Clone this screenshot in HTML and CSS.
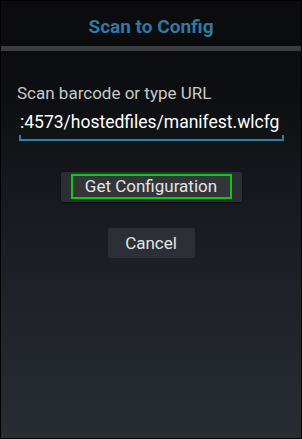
FILE: index.html
```html
<!DOCTYPE html>
<html lang="en">
<head>
    <meta charset="UTF-8">
    <meta name="viewport" content="width=device-width, initial-scale=1.0">
    <title>Scan to Config</title>
    <link rel="stylesheet" href="styles.css">
</head>
<body>

    <div class="dialog">
        <div class="dialog-title">Scan to Config</div>
        <div class="dialog-divider"></div>

        <div class="dialog-body">
            <label class="field-label" for="url">Scan barcode or type URL</label>
            <div class="field">
                <span class="field-value" id="url">:4573/hostedfiles/manifest.wlcfg</span>
            </div>

            <div class="actions">
                <button class="btn btn-primary"><span class="btn-focus">Get Configuration</span></button>
                <button class="btn btn-cancel">Cancel</button>
            </div>
        </div>
    </div>

</body>
</html>
```

FILE: styles.css
```css
body {
    margin: 0;
    padding: 0;
    background-color: #000;
    font-family: Roboto, "Noto Sans", sans-serif;
}

.dialog {
    width: 302px;
    height: 439px;
    box-sizing: border-box;
    border: 1px solid #000;
    display: flex;
    flex-direction: column;
    background: linear-gradient(to bottom, #0b0d10 0%, #0c0e11 20%, #1c2025 60%, #282d34 100%);
}

.dialog-title {
    height: 45px;
    box-sizing: border-box;
    padding-top: 14px;
    text-align: center;
    font-size: 19px;
    font-weight: bold;
    line-height: 23px;
    color: #2e7aa3;
    background-color: #0b0c0e;
}

.dialog-divider {
    height: 5px;
    background-color: #3b3c3e;
}

.dialog-body {
    display: flex;
    flex-direction: column;
    padding: 32px 16px 0 16px;
}

.field-label {
    font-size: 17px;
    line-height: 20px;
    color: #c8c8c8;
}

/* garis bawah input dengan ujung kecil */
.field {
    margin: 7px 1px 0 2px;
    height: 31px;
    box-sizing: border-box;
    border-bottom: 2px solid #2b7ea6;
    position: relative;
}

.field::before,
.field::after {
    content: "";
    position: absolute;
    bottom: 0;
    width: 2px;
    height: 4px;
    background-color: #2b7ea6;
}

.field::before {
    left: 0;
}

.field::after {
    right: 0;
}

.field-value {
    display: block;
    padding-left: 1px;
    font-size: 17.5px;
    line-height: 24px;
    color: #ffffff;
    white-space: nowrap;
    overflow: hidden;
}

.actions {
    display: flex;
    flex-direction: column;
    align-items: center;
    gap: 26px;
    margin-top: 31px;
}

.btn {
    font-family: Roboto, "Noto Sans", sans-serif;
    font-size: 17px;
    color: #e4e4e4;
    border: none;
    border-radius: 2px;
    cursor: pointer;
}

.btn-primary {
    width: 181px;
    height: 30px;
    padding: 2px 0 3px 0;
    background-color: #2b2e33;
    box-shadow: 0 1px 2px rgba(0, 0, 0, 0.6);
    display: flex;
    justify-content: center;
}

.btn-focus {
    display: block;
    width: 161px;
    height: 25px;
    box-sizing: border-box;
    border: 2px solid #16c416;
    line-height: 21px;
    background-color: #32353a;
}

.btn-cancel {
    width: 87px;
    height: 30px;
    padding: 0;
    line-height: 30px;
    background-color: #2c3036;
}
```
